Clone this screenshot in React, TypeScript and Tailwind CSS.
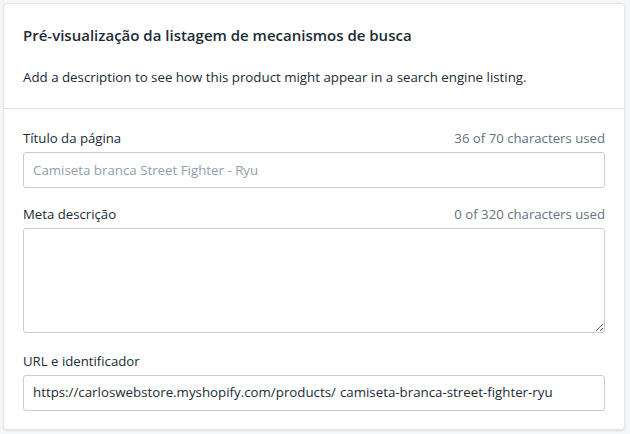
export default function App() {
  return (
    <div
      className="min-h-[434px] w-[630px] bg-[#f4f6f8] pt-[3px] pl-[3px]"
      style={{ fontFamily: '"Open Sans", "Noto Sans", sans-serif' }}
    >
      <div className="w-[622px] rounded-[4px] border border-[#e3e6e9] bg-white shadow-[0_1px_2px_rgba(63,63,68,0.12)]">
        {/* Header */}
        <div className="px-[19px] pt-[19px] pb-[21px] border-b border-[#dfe3e8]">
          <h2 className="text-[15px] leading-[24px] font-semibold text-[#212b36]">
            Pré-visualização da listagem de mecanismos de busca
          </h2>
          <p className="mt-[20px] text-[13.3px] leading-[20px] text-[#212b36]">
            Add a description to see how this product might appear in a search engine listing.
          </p>
        </div>

        {/* Fields */}
        <div className="px-[19px] pt-[19px] pb-[18px]">
          <div className="flex justify-between text-[13.2px] leading-[20px] mb-[4px]">
            <label className="text-[#212b36]">Título da página</label>
            <span className="text-[#637381]">36 of 70 characters used</span>
          </div>
          <input
            type="text"
            placeholder="Camiseta branca Street Fighter - Ryu"
            className="block w-full h-[36px] rounded-[3px] border border-[#c4cdd5] px-[9px] text-[13.3px] text-[#212b36] placeholder:text-[#919eab] shadow-[inset_0_1px_0_rgba(99,115,129,0.05)] outline-none"
          />

          <div className="mt-[16px] flex justify-between text-[13.2px] leading-[20px] mb-[4px]">
            <label className="text-[#212b36]">Meta descrição</label>
            <span className="text-[#637381]">0 of 320 characters used</span>
          </div>
          <textarea className="block w-full h-[105px] rounded-[3px] border border-[#c4cdd5] px-[9px] py-[6px] text-[13.3px] text-[#212b36] outline-none" />

          <div className="mt-[18px] flex justify-between text-[13.2px] leading-[20px] mb-[4px]">
            <label className="text-[#212b36]">URL e identificador</label>
          </div>
          <div className="flex items-center h-[36px] rounded-[3px] border border-[#c4cdd5] px-[9px] text-[13.3px] text-[#212b36]">
            <span>https://carloswebstore.myshopify.com/products/</span>
            <span className="ml-[4px]">camiseta-branca-street-fighter-ryu</span>
          </div>
        </div>
      </div>
    </div>
  )
}
